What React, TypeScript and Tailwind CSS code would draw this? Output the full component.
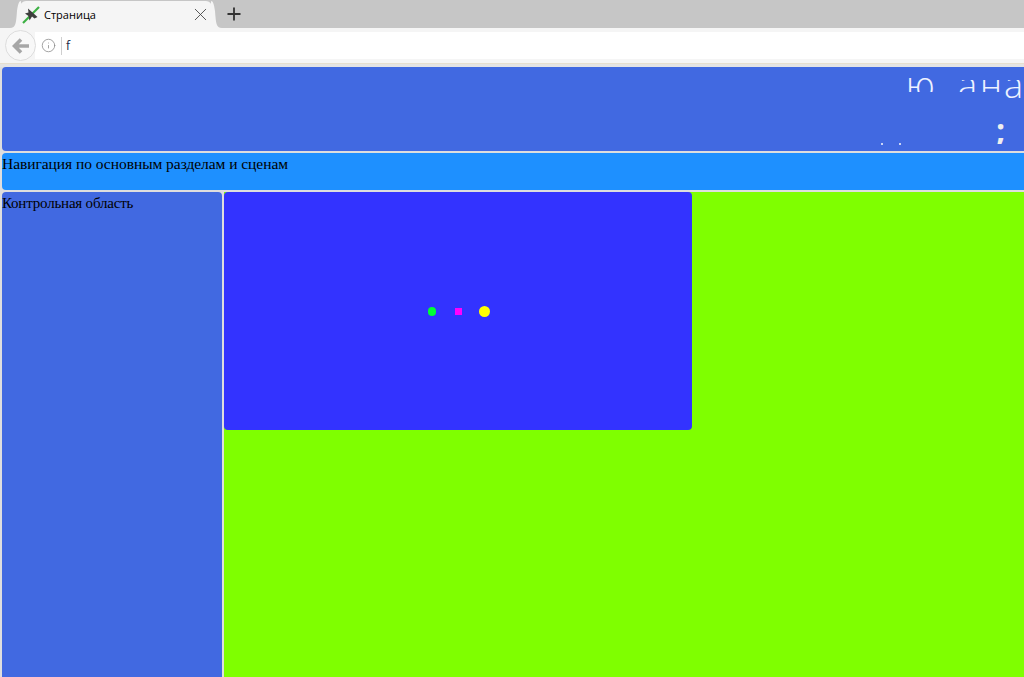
import { Info, Plus, X } from 'lucide-react';

/** Browser favicon: dark pushpin crossed by a green stroke */
function PinIcon() {
  return (
    <svg width="18" height="18" viewBox="0 0 18 18" aria-hidden="true">
      <path d="M1 17 L17 1" stroke="#3cb043" strokeWidth="2.2" fill="none" />
      <path d="M6 2.5 L15.5 11 L12.5 12.5 L10 10.5 L7.5 14.5 L6.5 10 L3 7.5 L6.5 6.5 Z" fill="#3d3d3d" />
    </svg>
  );
}

function Tab() {
  return (
    <div className="relative flex items-center w-[192px] h-[27px] ml-[20px] bg-[#f5f5f5] rounded-t-[6px] pl-[2px] pr-[1px]">
      <svg className="absolute -left-[10px] bottom-0" width="11" height="27" viewBox="0 0 11 27" aria-hidden="true">
        <path d="M0 27 C6 27 6 22 7 10 C8 3 9 0 11 0 L11 27 Z" fill="#f5f5f5" />
      </svg>
      <svg className="absolute -right-[10px] bottom-0" width="11" height="27" viewBox="0 0 11 27" aria-hidden="true">
        <path d="M11 27 C5 27 5 22 4 10 C3 3 2 0 0 0 L0 27 Z" fill="#f5f5f5" />
      </svg>
      <PinIcon />
      <span className="ml-[4px] text-[11px] leading-none text-black">Страница</span>
      <X className="ml-auto text-[#444444]" size={21} strokeWidth={1} />
    </div>
  );
}

function BackButton() {
  return (
    <div className="relative z-10 flex items-center justify-center w-[31px] h-[31px] rounded-full border border-[#dddddd] bg-[#f8f8f8]">
      <svg width="18" height="16" viewBox="0 0 18 16" aria-hidden="true">
        <path d="M9 1.5 L2.5 8 L9 14.5 M3 8 L17 8" stroke="#a6a6a6" strokeWidth="3.6" fill="none" />
      </svg>
    </div>
  );
}

function BrowserChrome() {
  return (
    <div className="flex flex-col shrink-0 font-['Open_Sans',sans-serif]">
      <div className="flex items-end h-[28px] bg-[#c6c6c6]">
        <Tab />
        <Plus className="ml-[12px] mb-[4px] text-[#333333]" size={20} strokeWidth={2.2} />
      </div>
      <div className="flex items-center h-[36px] bg-[#f5f5f5] pl-[5px] border-b border-[#e6dfcf]">
        <BackButton />
        <div className="flex flex-1 items-center h-[27px] bg-white pl-[6px] -ml-px">
          <Info className="text-[#8a8a8a]" size={15} strokeWidth={1.25} />
          <div className="ml-[5px] w-px h-[18px] bg-[#cfcfcf]" />
          <span className="ml-[4px] text-[12px] text-[#1a2a44]">f</span>
        </div>
      </div>
      <div className="h-[3px] bg-[#e4e4e4]" />
    </div>
  );
}

function Header() {
  const glyph = "text-[36px] leading-[40px] text-[#eef2ff] whitespace-nowrap font-['Open_Sans',sans-serif] font-light";
  return (
    <header className="relative h-[84px] ml-[2px] bg-[#4169e1] rounded-l-[4px] overflow-hidden shrink-0">
      {/* the reference shows only the broken top part of this heading */}
      <div className="absolute left-[904px] top-[11px] h-[14px] overflow-hidden">
        <div className={`-mt-[13px] ${glyph}`}>ю</div>
      </div>
      <div className="absolute left-[956px] top-[13px] w-[44px] h-[12px] overflow-hidden">
        <div className={`-mt-[15px] tracking-[3px] ${glyph}`}>ан</div>
      </div>
      <div className="absolute left-[1002px] top-[13px] h-[19px] overflow-hidden">
        <div className={`-mt-[15px] ${glyph}`}>а</div>
      </div>
      <div className="absolute left-[994px] top-[47px] h-[30px] overflow-hidden text-[32px] leading-[32px] font-bold text-[#eeeeee] font-['Open_Sans',sans-serif]">
        ;
      </div>
      <div className="absolute left-[879px] top-[76px] w-[2px] h-[2px] bg-[#c9d4f5]" />
      <div className="absolute left-[897px] top-[76px] w-[2px] h-[2px] bg-[#c9d4f5]" />
    </header>
  );
}

export default function App() {
  return (
    <div className="flex flex-col w-[1024px] h-[677px] overflow-hidden bg-[#dedede] font-['Liberation_Serif',serif] text-[16px] leading-[22px] text-black">
      <BrowserChrome />
      <Header />
      <nav className="h-[37px] mt-[2px] ml-[2px] bg-[#1e90ff] rounded-l-[4px] shrink-0 text-[15.5px] tracking-[-0.05px]">
        Навигация по основным разделам и сценам
      </nav>
      <div className="flex flex-1 gap-[2px] mt-[2px] ml-[2px] min-h-0">
        <aside className="w-[220px] bg-[#4169e1] rounded-t-[4px] shrink-0 text-[15px] tracking-[-0.2px]">
          Контрольная область
        </aside>
        <main className="flex-1 bg-[#7fff00]">
          <div className="flex items-center justify-center w-[468px] h-[238px] bg-[#3333ff] rounded-[4px]">
            <div className="flex items-center ml-[2px]">
              <div className="w-[8px] h-[9px] rounded-full bg-[#00ff33]" />
              <div className="w-[7px] h-[7px] ml-[19px] bg-[#ff00ff]" />
              <div className="w-[11px] h-[11px] ml-[17px] rounded-full bg-[#ffff00]" />
            </div>
          </div>
        </main>
      </div>
    </div>
  );
}
